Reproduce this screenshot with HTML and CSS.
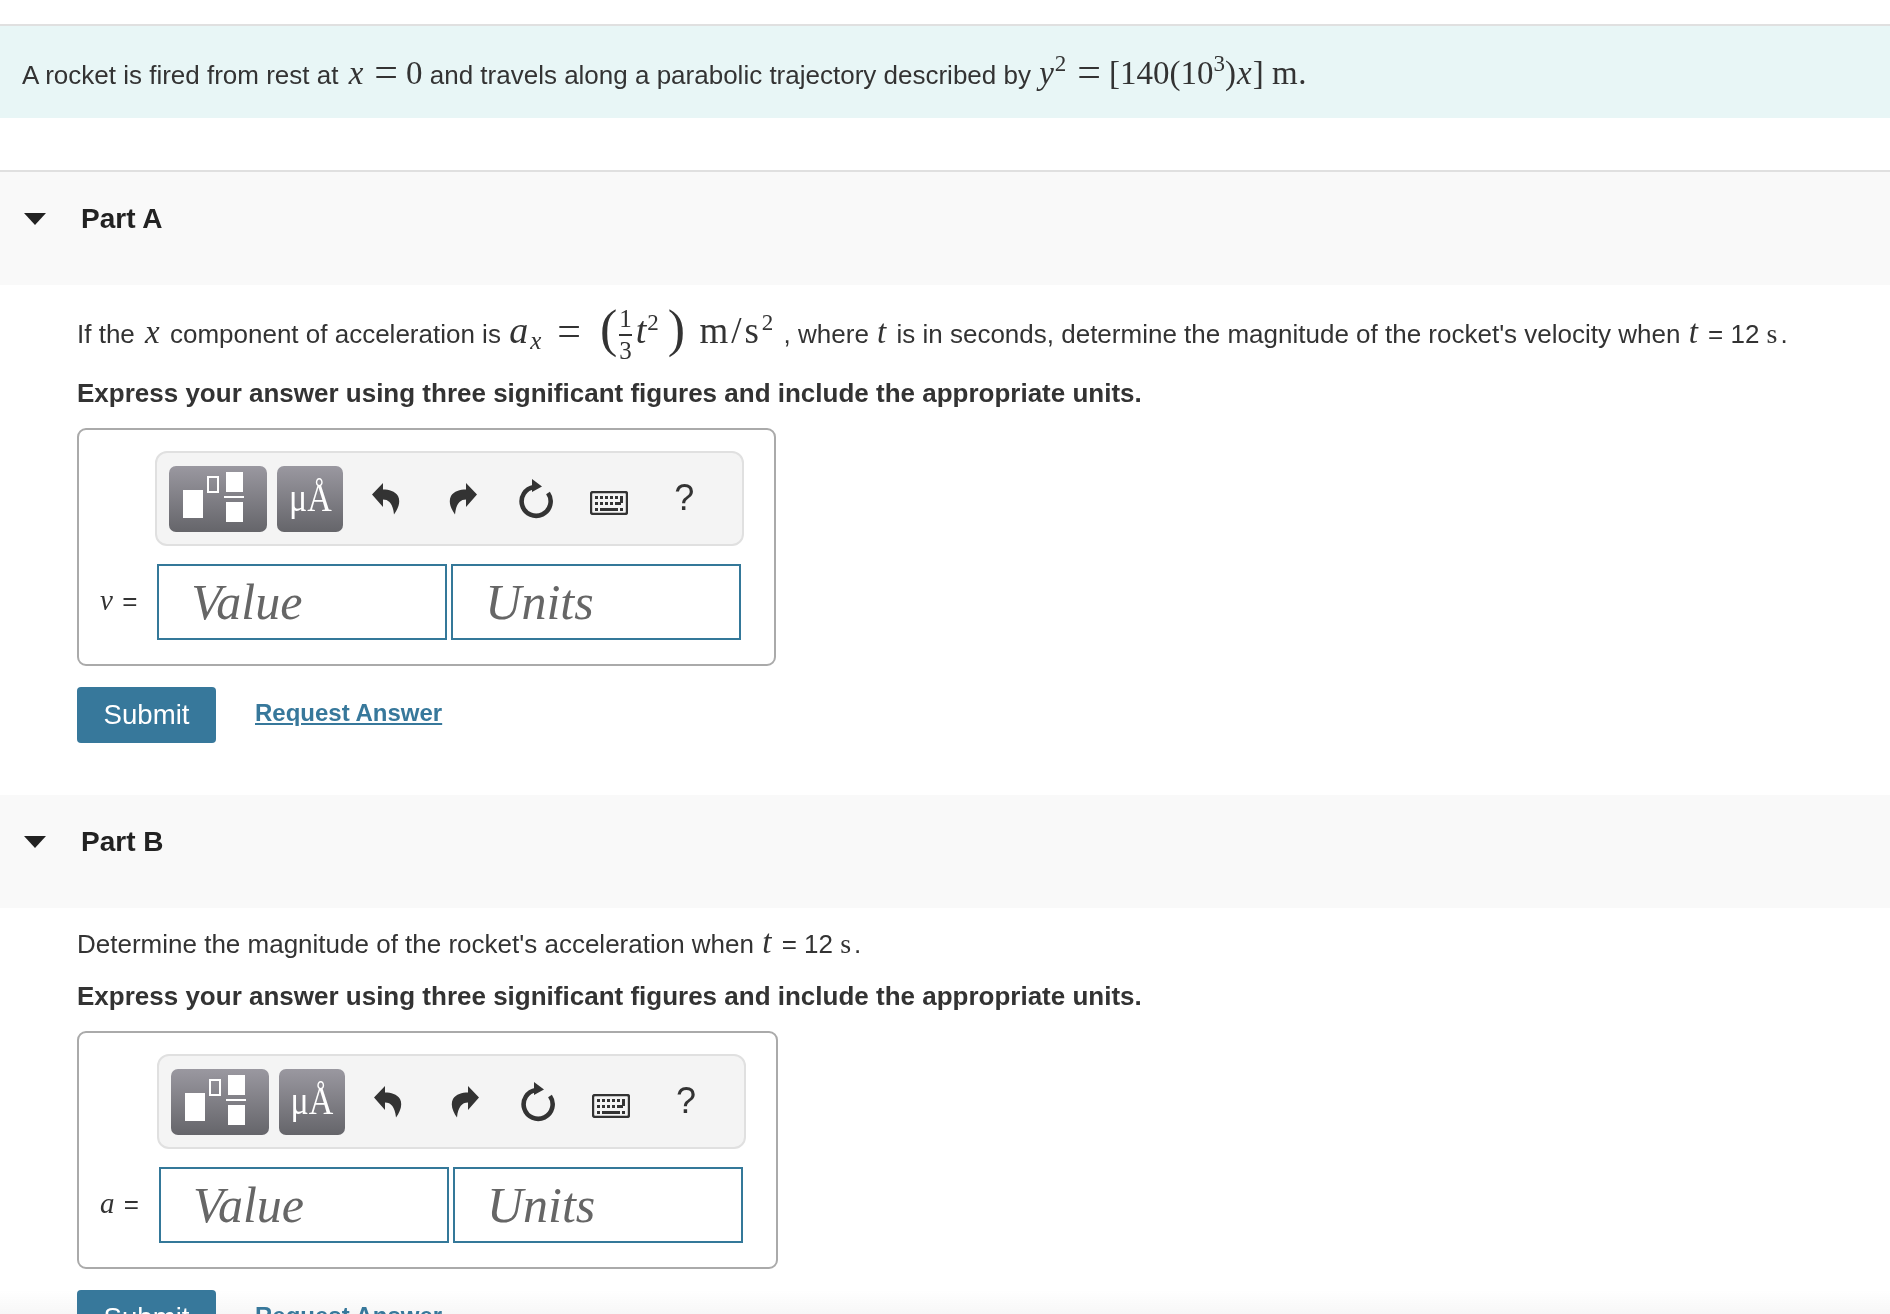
FILE: index.html
```html
<!DOCTYPE html>
<html lang="en">
<head>
<meta charset="utf-8">
<title>Rocket problem</title>
<link rel="stylesheet" href="styles.css">
</head>
<body>
<svg class="sprite" width="0" height="0">
  <symbol id="arrow" viewBox="0 0 28 32"><path d="M11 0 L0 11.5 L11 24 V16.5 C17 16.5 21 21 22 31.5 C26 26 29 19 26 13 C23 8 17 6.5 11 6.5 Z"/></symbol>
</svg>
<main class="page">
  <section class="intro">
    <p class="line">A rocket is fired from rest at <span class="m"><i class="xvar">x</i><span class="op">=</span>0</span> and travels along a parabolic trajectory described by <span class="m"><i>y</i><sup>2</sup><span class="op">=</span>[140(10<sup>3</sup>)<i>x</i>] <span class="wide">m.</span></span></p>
  </section>

  <section class="part part-first">
    <header class="part-head"><span class="caret"></span><h2>Part A</h2></header>
    <div class="part-body">
      <p class="line line-tall">If the <span class="m"><i class="xvar">x</i></span> component of acceleration is <span class="m"><i class="big">a</i><sub><i>x</i></sub><span class="op">=</span><span class="paren">(</span><span class="frac"><span>1</span><span class="frac-low">3</span></span><i class="big">t</i><sup>2</sup><span class="paren">)</span> <span class="wide-units">m/s<sup>2</sup></span></span> , where <span class="m"><i class="tvar">t</i></span> is in seconds, determine the magnitude of the rocket's velocity when <span class="m"><i class="tvar">t</i></span> = 12 <span class="m unit">s</span>.</p>
      <p class="line strong">Express your answer using three significant figures and include the appropriate units.</p>
      <div class="box">
        <div class="blank"></div>
        <div class="toolbar">
          <div class="tool-btn tool-wide">
            <svg width="98" height="66" viewBox="0 0 98 66" fill="#fff"><rect x="14" y="24" width="20" height="28"/><rect x="39" y="11" width="10" height="15" fill="none" stroke="#fff" stroke-width="2"/><rect x="57" y="6" width="17" height="20"/><rect x="55" y="30" width="20" height="2"/><rect x="57" y="36" width="17" height="20"/></svg>
          </div>
          <div class="tool-btn tool-narrow"><span class="mu">μÅ</span></div>
          <svg class="ico undo" width="28" height="32"><use href="#arrow"/></svg>
          <svg class="ico redo" width="28" height="32"><use href="#arrow"/></svg>
          <svg class="ico reload" width="36" height="40" viewBox="0 0 36 40"><path d="M17 8 A14.5 14.5 0 1 0 31 14" fill="none" stroke="#333" stroke-width="4.6"/><path d="M15 0 L25 7.5 L15 13 Z" fill="#333"/></svg>
          <svg class="ico keys" width="38" height="24" viewBox="0 0 38 24"><rect x="1" y="1" width="36" height="22" rx="2" fill="none" stroke="#333" stroke-width="2.4"/><g fill="#333"><rect x="5" y="5" width="3" height="3"/><rect x="10" y="5" width="3" height="3"/><rect x="15" y="5" width="3" height="3"/><rect x="20" y="5" width="3" height="3"/><rect x="25" y="5" width="3" height="3"/><rect x="30" y="5" width="3" height="7"/><rect x="5" y="11" width="3" height="3"/><rect x="10" y="11" width="3" height="3"/><rect x="15" y="11" width="3" height="3"/><rect x="20" y="11" width="3" height="3"/><rect x="25" y="11" width="6" height="3"/><rect x="5" y="17" width="3" height="3"/><rect x="10" y="17" width="18" height="3"/><rect x="30" y="17" width="3" height="3"/></g></svg>
          <span class="help">?</span>
        </div>
        <div class="var"><i>v</i> <span class="var-eq">=</span></div>
        <div class="fields">
          <div class="field">Value</div>
          <div class="field">Units</div>
        </div>
      </div>
      <div class="actions">
        <button class="submit" type="button">Submit</button>
        <a class="answer" href="#">Request Answer</a>
      </div>
    </div>
  </section>

  <section class="part">
    <header class="part-head"><span class="caret"></span><h2>Part B</h2></header>
    <div class="part-body">
      <p class="line">Determine the magnitude of the rocket's acceleration when <span class="m"><i class="tvar">t</i></span> = 12 <span class="m unit">s</span>.</p>
      <p class="line strong">Express your answer using three significant figures and include the appropriate units.</p>
      <div class="box">
        <div class="blank"></div>
        <div class="toolbar">
          <div class="tool-btn tool-wide">
            <svg width="98" height="66" viewBox="0 0 98 66" fill="#fff"><rect x="14" y="24" width="20" height="28"/><rect x="39" y="11" width="10" height="15" fill="none" stroke="#fff" stroke-width="2"/><rect x="57" y="6" width="17" height="20"/><rect x="55" y="30" width="20" height="2"/><rect x="57" y="36" width="17" height="20"/></svg>
          </div>
          <div class="tool-btn tool-narrow"><span class="mu">μÅ</span></div>
          <svg class="ico undo" width="28" height="32"><use href="#arrow"/></svg>
          <svg class="ico redo" width="28" height="32"><use href="#arrow"/></svg>
          <svg class="ico reload" width="36" height="40" viewBox="0 0 36 40"><path d="M17 8 A14.5 14.5 0 1 0 31 14" fill="none" stroke="#333" stroke-width="4.6"/><path d="M15 0 L25 7.5 L15 13 Z" fill="#333"/></svg>
          <svg class="ico keys" width="38" height="24" viewBox="0 0 38 24"><rect x="1" y="1" width="36" height="22" rx="2" fill="none" stroke="#333" stroke-width="2.4"/><g fill="#333"><rect x="5" y="5" width="3" height="3"/><rect x="10" y="5" width="3" height="3"/><rect x="15" y="5" width="3" height="3"/><rect x="20" y="5" width="3" height="3"/><rect x="25" y="5" width="3" height="3"/><rect x="30" y="5" width="3" height="7"/><rect x="5" y="11" width="3" height="3"/><rect x="10" y="11" width="3" height="3"/><rect x="15" y="11" width="3" height="3"/><rect x="20" y="11" width="3" height="3"/><rect x="25" y="11" width="6" height="3"/><rect x="5" y="17" width="3" height="3"/><rect x="10" y="17" width="18" height="3"/><rect x="30" y="17" width="3" height="3"/></g></svg>
          <span class="help">?</span>
        </div>
        <div class="var"><i>a</i> <span class="var-eq">=</span></div>
        <div class="fields">
          <div class="field">Value</div>
          <div class="field">Units</div>
        </div>
      </div>
      <div class="actions">
        <button class="submit" type="button">Submit</button>
        <a class="answer" href="#">Request Answer</a>
      </div>
    </div>
  </section>
</main>
<div class="fade"></div>
</body>
</html>
```
FILE: styles.css
```css
* { box-sizing: border-box; }
html, body { margin: 0; height: 100%; overflow: hidden; background: #fff; }
body { font-family: "Liberation Sans", Arial, sans-serif; font-size: 26px; color: #333; }
.sprite { position: absolute; }
.page { padding-top: 24px; position: relative; z-index: 1; }
h2, p { margin: 0; }

.intro { border-top: 2px solid #e0e0e0; background: #e8f6f6; height: 94px; display: flex; align-items: center; padding: 6px 0 0 22px; margin-bottom: 52px; }
.line { line-height: 36px; white-space: nowrap; }
.line-tall { line-height: 63px; height: 56px; }
.strong { font-weight: 700; margin-top: 16px; }

.m { font-family: "Liberation Serif", "Times New Roman", serif; font-size: 33px; line-height: 0; }
.m i { font-style: italic; padding: 0 1px; }
.m sup, .m sub { font-size: 23px; line-height: 0; }
.m sup { vertical-align: 13px; }
.m sub { vertical-align: -6px; font-size: 25px; margin-right: 7px; }
.op { margin: 0 8px; font-size: 42px; line-height: 0; vertical-align: -2px; }
sup + .op { margin-left: 11px; }
.big + sup { margin-right: 7px; }
.wide { letter-spacing: .8px; }
.wide-units { font-size: 37px; letter-spacing: 3px; margin-left: 4px; }
.xvar { padding: 0 3px !important; }
.tvar { padding: 0 3px 0 1px !important; }
.unit { letter-spacing: 3px; font-size: 28px; }
.big { font-size: 38px; }
.paren { font-size: 52px; font-weight: 400; line-height: 0; vertical-align: -3px; margin: 0 2px; }
.op + .paren { margin-left: 11px; }
.frac { display: inline-flex; flex-direction: column; vertical-align: middle; font-size: 25px; line-height: 30px; text-align: center; margin: 0 3px 0 0; }
.frac-low { border-top: 2px solid #333; }

.part-first { border-top: 2px solid #e0e0e0; }
.part-head { height: 113px; background: #f9f9f9; display: flex; align-items: center; padding-left: 24px; padding-bottom: 20px; }
.caret { width: 0; height: 0; border-left: 11px solid transparent; border-right: 11px solid transparent; border-top: 12px solid #222; margin-right: 35px; }
h2 { font-size: 28px; font-weight: 700; color: #222; }
.part-body { padding: 18px 0 52px 77px; }

.box { display: inline-grid; grid-template-columns: auto auto; align-items: center; border: 2px solid #aaa; border-radius: 9px; padding: 21px 30px 24px 21px; margin-top: 17px; row-gap: 18px; background: #fff; vertical-align: top; }
.toolbar { width: 589px; height: 95px; border: 2px solid #e0e0e0; border-radius: 12px; background: #f4f4f4; display: flex; align-items: flex-start; padding: 13px 0 0 12px; }
.tool-btn { height: 66px; border-radius: 7px; background: linear-gradient(#9a98a0, #65656a); display: flex; align-items: center; justify-content: center; }
.tool-wide { width: 98px; margin-right: 10px; }
.tool-narrow { width: 66px; }
.mu { font-family: "Liberation Serif", serif; font-size: 34px; color: #fff; display: inline-block; transform: scaleY(1.15); margin-bottom: 3px; }
.ico { fill: #333; flex: none; }
.undo { margin: 17px 0 0 29px; }
.redo { margin: 17px 0 0 49px; transform: scaleX(-1); }
.reload { margin: 13px 0 0 40px; }
.keys { margin: 25px 0 0 37px; }
.help { font-size: 36px; line-height: 40px; margin: 12px 0 0 46px; }

.var { font-family: "Liberation Serif", serif; font-size: 29px; padding: 0 18px 4px 0; white-space: nowrap; }
.var-eq { font-family: "Liberation Sans", Arial, sans-serif; font-size: 26px; margin-left: 2px; }
.fields { display: flex; gap: 4px; padding-left: 2px; }
.field { width: 290px; height: 76px; border: 2px solid #347899; font-family: "Liberation Serif", serif; font-style: italic; font-size: 50px; line-height: 72px; color: #666; padding-left: 32px; background: #fff; }

.actions { display: flex; align-items: center; margin-top: 21px; gap: 39px; }
.submit { width: 139px; height: 56px; border: 0; border-radius: 4px; background: #37789b; color: #fff; font: 27.6px "Liberation Sans", Arial, sans-serif; padding: 0; }
.answer { font-size: 24px; font-weight: 700; color: #37789b; margin-bottom: 4px; }
.fade { position: fixed; z-index: 0; left: 0; right: 0; bottom: 0; height: 24px; background: linear-gradient(rgba(245,245,245,0), rgba(245,245,245,.8)); pointer-events: none; }
```
